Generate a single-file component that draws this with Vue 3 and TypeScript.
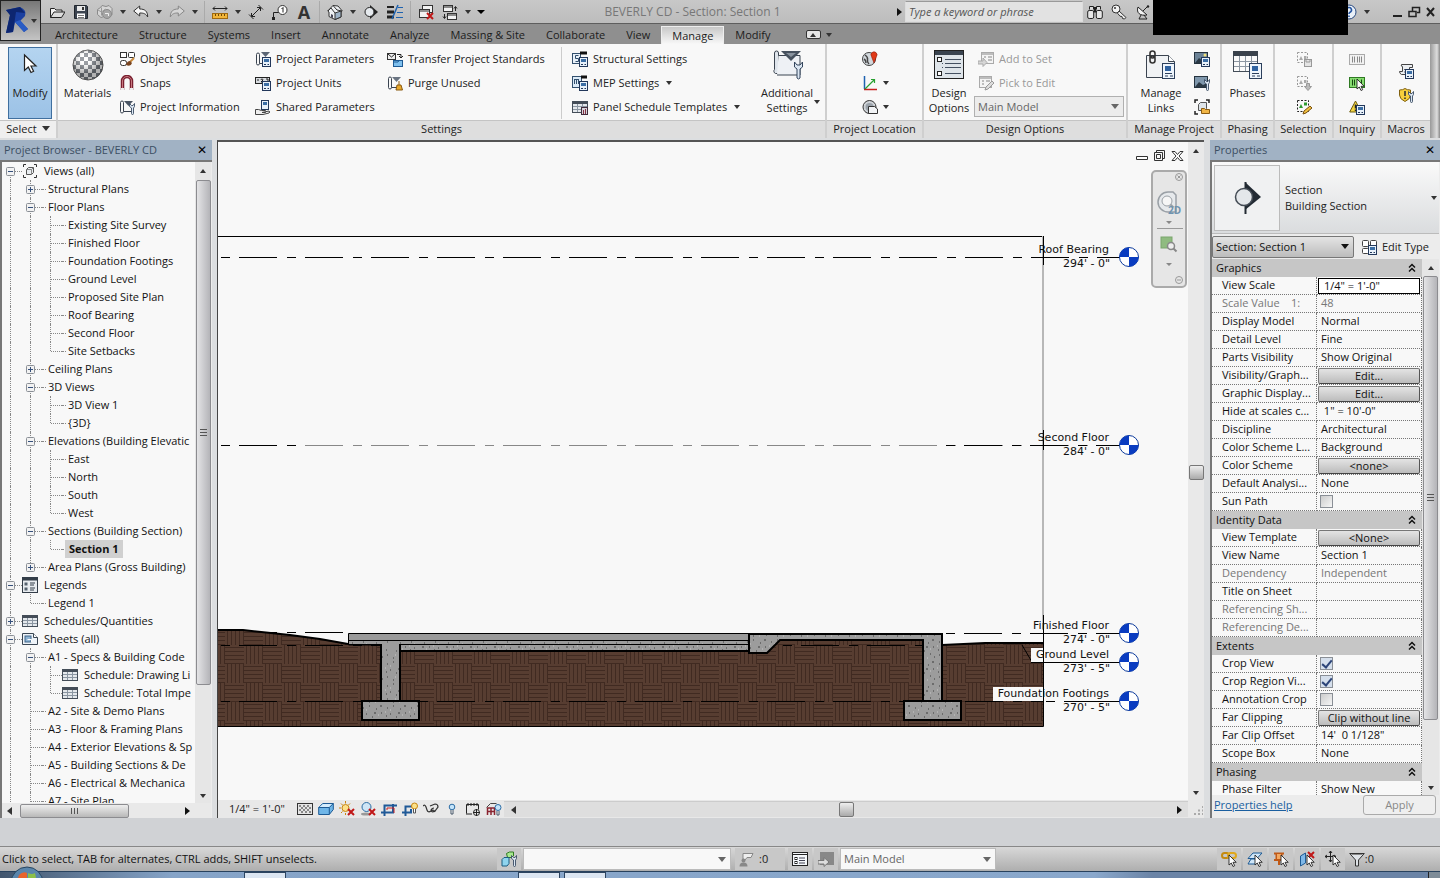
<script setup lang="ts">
import { reactive, ref } from 'vue'

/* ---------- icon artwork (inner SVG markup) ---------- */
const doc = '<rect x="7.5" y="6.5" width="8" height="9" fill="#e8f1fa" stroke="#22375a"/><rect x="9" y="8" width="5" height="3" fill="#3b6ea5"/><path d="M9 13.5h2M12.5 13.5h1.5" stroke="#22375a"/>'
const doc2 = '<rect x="17.500" y="14.500" width="12" height="15" fill="#eef5fc" stroke="#2b3f5c"/><rect x="20" y="17" width="6" height="5" fill="#2f62a0"/><path d="M20 24.500h7M20 27h3M25 27h3" stroke="#2b3f5c"/>'
const cursor = '<path d="M8 4v10l2.300-2 1.700 3.500 1.700-.8-1.700-3.400h3.200z" fill="#fff" stroke="#222" stroke-width=".9"/>'
const wrench = '<path d="M10.500 4.500v3l2 1.500v5.500a1 1 0 0 0 2 0V9l1-1.500v-3l-1.500 2h-1.500z" fill="#dbe6f2" stroke="#3a4c63" stroke-width=".9"/>'
const scroll = '<path d="M1.500 3.500a1.500 1.500 0 0 1 3 0v9H14M4.500 12.500a1.500 1.500 0 0 1-3 0v-9" fill="none" stroke="#3a4350"/>'
const redX = '<path d="M9 8l6 6M15 8l-6 6" stroke="#c01818" stroke-width="2"/>'
const sheetTable = '<rect x=".5" y="2.500" width="15" height="11" fill="#e4e8ec" stroke="#444d58"/><path d="M0 4h16" stroke="#444d58" stroke-width="2"/><path d="M5.500 5v8M1 7.500h14M1 10.500h14M10.500 5v8" stroke="#8b96a2"/>'
const grayObjs = '<path d="M1.500 1.500h10v10h-10z" fill="none" stroke="#999" stroke-dasharray="2 1.500"/><path d="M3 9l2-4 2 4zM8 5h2.500v3H8z" fill="#aaa"/>'

const icons: Record<string, string> = {
  open: '<path d="M1.500 13.500v-9h4l1.500 1.500h6v2" fill="#f2f2f2" stroke="#222"/><path d="M1.500 13.500L5 8h11l-3.500 5.500z" fill="#ddd" stroke="#222"/>',
  save: '<path d="M1.500 1.500h12l1 1v12h-13z" fill="#3c4450" stroke="#20252c"/><rect x="4" y="2" width="8" height="5" fill="#e8e8e8"/><rect x="4" y="9.500" width="8" height="5" fill="#fff"/><path d="M5 11.500h6M5 13.500h6" stroke="#777"/><rect x="9" y="3" width="2" height="3" fill="#333"/>',
  sync: '<path d="M.5 5.500l3-2 1.500-2 4 1 3-1 3 3v6l-4 4-4-2-3 1-3.500-3z" fill="#d6d6d6" stroke="#8a8a8a"/><circle cx="10" cy="10" r="4.500" fill="#a6a6a6" stroke="#8a8a8a"/><path d="M4.500 3.500v8M1 6l3.500 2 4-3" stroke="#999" fill="none"/><path d="M8 9.500h3.500V12" stroke="#eee" fill="none"/>',
  undo: '<path d="M.7 7l6-5v3c5 0 8 2 8 8-2-3.500-4-4-8-4v3z" fill="#f6f6f6" stroke="#333"/>',
  redo: '<path d="M15.300 7l-6-5v3c-5 0-8 2-8 8 2-3.500 4-4 8-4v3z" fill="#d6d6d6" stroke="#888"/>',
  measure: '<path d="M1 4.500h14M3 2.500l-2 2 2 2M13 2.500l2 2-2 2" stroke="#222" fill="none"/><rect x=".5" y="9.500" width="15" height="5" fill="#f2b63a" stroke="#a06a10"/><path d="M3.500 10v2M6.500 10v2M9.500 10v2M12.500 10v2" stroke="#704a08"/>',
  dim: '<path d="M3.500 12.500L12.500 3.500M3.500 9v3.500H7M9 3.500h3.500V7M1 10.500l4.500 4.500M10.500 1l4.500 4.500" stroke="#222" fill="none"/>',
  tag: '<path d="M1.500 15.500v-7h6" stroke="#222" fill="none"/><circle cx="10.500" cy="6" r="4.500" fill="#fff" stroke="#333"/><path d="M9.500 5l1.500-1.500v5" stroke="#222" fill="none"/><rect y="13" width="3" height="3" fill="#222"/>',
  house: '<path d="M.7 7L6 1.500l5 .5 4.300 5-1.300 1v5l-6 2.500-6-3V8z" fill="#eef1f4" stroke="#333"/><path d="M8 9l6-2v6L8 15.500z" fill="#9fb4c8" stroke="#333"/><path d="M1 7l3-3 4 5M6 1.500L10 6l5 1" stroke="#333" fill="none"/><path d="M4 10v3l2 1v-3z" fill="#445"/>',
  section: '<path d="M7 1l8 7-8 7z" fill="#222"/><circle cx="6.500" cy="8" r="4.500" fill="#e6eaee" stroke="#222"/>',
  thin: '<path d="M0 3h7" stroke="#222" stroke-width="2"/><path d="M0 8h7" stroke="#222" stroke-width="3"/><path d="M0 13h7" stroke="#222" stroke-width="3"/><path d="M5 15L11 1" stroke="#1d62b0" stroke-width="1.500"/><path d="M11 3.500h5M10 8.500h6M9 13.500h7" stroke="#1d62b0"/>',
  closeHidden: '<rect x="4.500" y="1.500" width="10" height="7" fill="#f2f2f2" stroke="#333"/><rect x="1.500" y="5.500" width="10" height="8" fill="#f2f2f2" stroke="#333"/><path d="M2 7h9" stroke="#333"/><path d="M9 9l6 6M15 9l-6 6" stroke="#c01818" stroke-width="2"/>',
  switchWin: '<rect x="1.500" y="1.500" width="9" height="6" fill="#f2f2f2" stroke="#333"/><rect x="5.500" y="9.500" width="9" height="6" fill="#f2f2f2" stroke="#333"/><path d="M5 11h10M1 3h9M13.500 7V3M12 4.500l1.500-2 1.500 2M2.500 10v4M1 12.500l1.500 2 1.500-2" stroke="#222" fill="none"/>',
  binoc: '<path d="M2.500 5.500v-3h4v3M9.500 5.500v-3h4v3" fill="#ddd" stroke="#222"/><rect x=".7" y="6.500" width="6" height="8" rx="1.500" fill="#e6e6e6" stroke="#222"/><rect x="9.300" y="6.500" width="6" height="8" rx="1.500" fill="#e6e6e6" stroke="#222"/><path d="M6.500 7.500h3M8 3v5" stroke="#222" stroke-width="2"/>',
  key: '<circle cx="5" cy="5" r="4" fill="#f2f2f2" stroke="#333"/><circle cx="4" cy="4" r="1" fill="#333"/><path d="M8 7l7 6.500-1.500 1.500-2-.5-.5-2-2-.3-2.500-3z" fill="#eee" stroke="#333"/>',
  dish: '<path d="M3 3c-2 6 2 9 9 8z" fill="#f2f2f2" stroke="#222"/><path d="M8 7l5-5M6 11l-2 4h8l-3-4" stroke="#222" fill="none"/><circle cx="13" cy="2.500" r="1.200" fill="#222"/>',
  help: '<circle cx="8" cy="8" r="7" fill="#e9f0f8" stroke="#2a4a80"/><path d="M5.500 6a2.500 2.500 0 1 1 3.500 2.300q-1 .4-1 1.700M8 11.500v1.500" fill="none" stroke="#2454a0" stroke-width="1.600"/>',
  pointer: '<path d="M10.500 6v15.500l3.800-3.500 2.700 5.500 2.600-1.200-2.600-5.300h5z" fill="#fff" stroke="#222" stroke-width="1.200"/>',
  objStyles: '<rect x="1.500" y="1.500" width="6" height="5" fill="#fff" stroke="#333"/><rect x="9.500" y="1.500" width="6" height="5" rx="1" fill="#fff" stroke="#333"/><rect x="1.500" y="9.500" width="6" height="5" rx="2" fill="#fff" stroke="#333"/><path d="M15 7l-4 4" stroke="#c98a3c" stroke-width="2"/><path d="M7 14q1-4 4-4l2 2q-1 4-6 2z" fill="#7a4520"/>',
  snaps: '<path d="M3.500 15V6a4.500 4.500 0 0 1 9 0v9" fill="none" stroke="#7a2030" stroke-width="3.500"/><path d="M3.500 13V6a4.500 4.500 0 0 1 9 0v7" fill="none" stroke="#c87880" stroke-width="1"/><path d="M2 14h3M11 14h3" stroke="#eee" stroke-width="2"/>',
  projInfo: scroll + '<path d="M5 2h9l-4.500 5z" fill="#4a5564"/>' + wrench,
  projParam: scroll + '<path d="M6 1h9l-4.500 5z" fill="#5b6675"/>' + doc,
  units: '<rect x=".5" y="2.500" width="14" height="6" fill="#d8dce0" stroke="#222"/><path d="M3 4v2M6 5a1 1 0 1 1 2 0l-2 2h2M11 4h2v3h-2" stroke="#222" fill="none"/>' + doc,
  shared: '<rect x="6.500" y="1.500" width="7" height="9" fill="#e8f1fa" stroke="#22375a"/><rect x="8" y="3" width="4" height="3" fill="#3b6ea5"/><path d="M.5 10.500h3l3 1h4q1.500 1 0 2H7l7-1.500q1.500 1 0 2l-6 1.500H.5z" fill="#eee" stroke="#444"/>',
  transfer: '<rect x=".5" y="2.500" width="8" height="6" fill="#eee" stroke="#333"/><path d="M1 3l3.500 3L8 3M10 3.500h4v3M12 5l2 2 2-2" stroke="#222" fill="none"/><rect x="6.500" y="9.500" width="9" height="6" fill="#7fc0ee" stroke="#1d5a94"/><path d="M7 11h4l1-1.500" stroke="#1d5a94" fill="none"/>',
  purge: scroll + '<path d="M5 2h9l-4.500 5z" fill="#6a7482"/><path d="M12 6v4M9 15l1-5h4l1.500 5z" fill="#e9a92c" stroke="#8a5a10"/>',
  structSet: '<rect x=".5" y="2.500" width="8" height="10" fill="#eaf2fa" stroke="#33506e"/><path d="M6.500 4.500h-3v3h3v3h-3" stroke="#33506e" fill="none"/><path d="M8 2h7" stroke="#111" stroke-width="3"/>' + doc,
  mepSet: '<rect x=".5" y="1.500" width="9" height="11" fill="#dcebf8" stroke="#33506e"/><path d="M2 4.500h5M2.500 4v5M4.500 4v5M6.500 4v5" stroke="#33506e"/><path d="M9 2h6" stroke="#111" stroke-width="3"/>' + doc,
  panelSched: sheetTable + '<rect x="9.500" y="8.500" width="6" height="7" fill="#d8d4dc" stroke="#402c3c"/><path d="M11.500 15v-4M13.500 15v-5" stroke="#803040"/>',
  additional: '<path d="M3.500 4a2 2 0 0 1 4 0v20.500H4.500a2.500 2.500 0 0 1-1-4z" fill="#dfe5ec" stroke="#3b4450"/><path d="M7.500 6.500H29V26H6" fill="#eef1f5" stroke="#3b4450"/><path d="M10 2h20l-10 10z" fill="#47525f"/><path d="M15 4h10l-5 4z" fill="#8a949f"/><path d="M23.500 13v5l2.500 2v9q1.500 2 3 0v-9l2.500-2v-5l-2.500 3h-3z" fill="#dbe6f2" stroke="#33455c"/>',
  location: '<circle cx="7" cy="8" r="6.500" fill="#d2d8dd" stroke="#444"/><path d="M3 4q3 2 2.500 4.500T7 13M2 8q2 1 2 4" stroke="#444" fill="none" stroke-width="1.500"/><path d="M12 12L9.500 5.500a3 3 0 1 1 5 0z" fill="#e03a18" stroke="#901a08" stroke-width=".6"/>',
  axes: '<path d="M2.500 1v13" stroke="#1d62b0" stroke-width="1.500"/><path d="M2 14.500h13" stroke="#c82020" stroke-width="1.500"/><path d="M3 14l9-9M9 4.500h3.500V8" stroke="#28a030" fill="none" stroke-width="1.200"/>',
  position: '<circle cx="7.500" cy="8" r="6.500" fill="#d0d4d8" stroke="#333"/><circle cx="7.500" cy="8" r="4" fill="#9aa2aa"/><path d="M6.500 14.500v-7h6l3 2.500v4.500z" fill="#f2f4f6" stroke="#333"/>',
  designOpt: '<rect x="1.500" y="1.500" width="29" height="28" fill="#dfe5ea" stroke="#222"/><path d="M2 4h28" stroke="#3a4450" stroke-width="4"/><rect x="4.500" y="8.500" width="4" height="4" fill="#fff" stroke="#222"/><rect x="4.500" y="22.500" width="4" height="4" fill="#fff" stroke="#222"/><path d="M12 10.500h16M12 14.500h16M12 18.500h16M12 24.500h16M9 14.500h1M9 18.500h1" stroke="#445060"/>',
  addSet: '<rect x="3.500" y="1.500" width="12" height="11" fill="#f4f4f4" stroke="#aaa"/><path d="M4 3h11M6 6h2M10 6h4M10 9h4" stroke="#aaa" stroke-width="1.500"/><path d="M0 10h5V7l4 4.500-4 4V13H0z" fill="#d6d6d6" stroke="#aaa"/>',
  pickEdit: '<rect x="1.500" y="1.500" width="12" height="11" fill="#f4f4f4" stroke="#aaa"/><path d="M2 3h11M4 6h2M8 6h4M4 9h2" stroke="#aaa" stroke-width="1.500"/><path d="M7 15l1-3 6-6 2 2-6 6z" fill="#ddd" stroke="#999"/>',
  manageLinks: '<path d="M1.500 6.500h22l6 6v16h-28z" fill="#f0f2f4" stroke="#3b4450"/><path d="M23.500 6.500v6h6" fill="#fff" stroke="#3b4450"/><rect x="5" y="2" width="5" height="7" rx="2.500" fill="none" stroke="#333" stroke-width="1.600"/><rect x="5" y="7" width="5" height="7" rx="2.500" fill="none" stroke="#333" stroke-width="1.600"/>' + doc2,
  decal: '<rect x=".5" y="1.500" width="13" height="11" fill="#6b8296" stroke="#26333f"/><path d="M1 12l4-5 4 3 4-2v4z" fill="#2a3844"/><circle cx="11" cy="4" r="1.500" fill="#f2e27a"/>' + doc,
  images: '<rect x=".5" y="1.500" width="13" height="11" fill="#7f97ac" stroke="#26333f"/><path d="M1 12l4-5 4 3 4-2v4z" fill="#2a3844"/>' + wrench,
  startView: '<path d="M1 4V1h3M12 1h3v3M1 12v3h3" stroke="#222" fill="none" stroke-width="1.500"/><path d="M4.500 5.500l2-2h6v6l-2 2h-6z" fill="#dfe5ea" stroke="#555"/><path d="M7.500 14.500v-5h3l1 1h4v4z" fill="#f0b545" stroke="#8a5a10"/>',
  phases: '<rect x="1.500" y="2.500" width="24" height="20" fill="#fafafa" stroke="#444d58"/><path d="M1 4.500h25" stroke="#3a424c" stroke-width="5"/><path d="M2 12.500h23M2 17.500h23M7.500 7v15M13.500 7v15M19.500 7v15" stroke="#8d97a2"/>' + doc2,
  selSave: grayObjs + '<rect x="8.500" y="8.500" width="7" height="7" fill="#e4e4e4" stroke="#999"/><path d="M10 9v2h4V9" stroke="#999" fill="none"/>',
  selLoad: grayObjs + '<path d="M10.500 8.500h3v3h2L12 15.500l-3.500-4h2z" fill="#bbb" stroke="#999"/>',
  selEdit: '<path d="M1.500 1.500h11v11h-11z" fill="none" stroke="#222" stroke-dasharray="2 1.500"/><path d="M3 9l2-4 2 4zM8 3.500h3v3H8z" fill="#2f9a2f"/><path d="M7 15l1-3 6-5 2 2-6 5z" fill="#f0c040" stroke="#7a5010"/>',
  ids: '<rect x=".5" y="3.500" width="15" height="10" fill="#f2f2f2" stroke="#aaa"/><path d="M3.500 5.500v6M5.500 5.500v6M8.500 5.500v6M10.500 5.500v6M12.500 5.500v6" stroke="#888"/>',
  idSel: '<rect x=".5" y="2.500" width="15" height="10" fill="#86dc70" stroke="#2f7a22"/><path d="M3.500 4.500v6M5.500 4.500v6M8.500 4.500v6M12.500 4.500v6" stroke="#164a10"/>' + cursor,
  warn: '<path d="M6.500 2L.7 13h11.600z" fill="#f4d640" stroke="#6a5a10"/><path d="M6.500 5.500v4M6.500 10.500v1.500" stroke="#222" stroke-width="1.500"/>' + doc,
  macroMgr: '<path d="M3.500 1.500h11v3h-3v7h-8q-2-1-2-3h3v-5q-2 0-1-2z" fill="#eceff2" stroke="#444"/><path d="M6 6.500h4M6 9h2" stroke="#666"/>' + doc,
  macroSec: '<path d="M1.500 3Q5 3 7 1.500 9 3 12.500 3v5q0 4-5.500 6.500Q1.500 12 1.500 8z" fill="#f6cf3c" stroke="#806010"/><path d="M7 4v5M7 10.500v1.500" stroke="#333" stroke-width="1.600"/>' + wrench,
  views: '<path d="M1.500 4V1.500H4M12 1.500h2.500V4M1.500 12v2.500H4M12 14.500h2.500V12" stroke="#333" fill="none"/><path d="M4.500 6.500l2-2h5v5l-2 2h-5z" fill="#e9edf0" stroke="#555"/><path d="M4.500 6.500h5v5M9.500 6.500l2-2" stroke="#888" fill="none"/>',
  legends: '<rect x=".5" y=".5" width="15" height="15" fill="#e8ecf0" stroke="#333d48"/><path d="M0 2h16" stroke="#333d48" stroke-width="3"/><path d="M8 6h5M8 8h4M8 11h5M8 13h4" stroke="#333d48"/><rect x="2.500" y="5.500" width="3" height="3" fill="#56626e"/><rect x="2.500" y="10.500" width="3" height="3" fill="#56626e"/>',
  schedule: sheetTable,
  sheets: '<path d="M.5 2.500h11l4 4v7H.5z" fill="#eef3f8" stroke="#3a4653"/><path d="M11.500 2.500v4h4" fill="#fff" stroke="#3a4653"/><rect x="3" y="5" width="6" height="6" fill="#8fb4d4" stroke="#3f6488"/><path d="M5.500 8.500h4v3" fill="none" stroke="#fff"/>',
  editType: '<rect x="1.500" y="1.500" width="6" height="6" rx="1" fill="#fff" stroke="#444"/><rect x="9.500" y="1.500" width="6" height="6" rx="1" fill="#fff" stroke="#444"/><rect x="1.500" y="9.500" width="6" height="5" rx="1" fill="#fff" stroke="#444"/>' + doc,
  detail: '<rect x="0" y="2" width="16" height="12" fill="#e4e4e4"/><path d="M2 5h12M2 9h12" stroke="#888" stroke-width="2" stroke-dasharray="2 2"/><path d="M4 7h10M4 11h10" stroke="#888" stroke-width="2" stroke-dasharray="2 2"/><rect x=".5" y="2.500" width="15" height="11" fill="none" stroke="#333"/>',
  style: '<path d="M.7 6.500l4-4h10.600v6l-4 5H.7z" fill="#6fb6e8" stroke="#1d5a94"/><path d="M.7 6.500h10.600v7M11.300 6.500l4-4" stroke="#1d5a94" fill="none"/><path d="M1.500 6l3.500-3h9l-3 3z" fill="#d4ecfc"/>',
  sun: '<circle cx="6.500" cy="7" r="3.500" fill="#fce08a" stroke="#c88510"/><path d="M6.500 0v2.500M6.500 12v2M0 7h2M2 2.500l1.500 1.500M11 2.500L9.500 4M2 12l1.500-1.500" stroke="#c88510"/>' + redX,
  shadow: '<circle cx="6.500" cy="6" r="4.500" fill="#cfe6f6" stroke="#2c6ca4"/><ellipse cx="6" cy="13" rx="5" ry="1.500" fill="#999"/>' + redX,
  crop: '<path d="M3.500 15V4.500H16M0 11.500h12V3" fill="none" stroke="#205a98" stroke-width="2"/><path d="M6 9V7h7v5" stroke="#c82020" fill="none"/>',
  cropShow: '<path d="M3.500 15V5.500H10M0 11.500h9V8" fill="none" stroke="#205a98" stroke-width="2"/><circle cx="12.500" cy="5" r="3" fill="#fbe18a" stroke="#c88510"/><path d="M11.500 8v4h2V8" fill="#fff" stroke="#555"/>',
  hide: '<path d="M0 5q2-2 3 1l1 3q1 3 4 1t4 1M7 5l5-2q3 0 3 3l-3 4q-4 2-4-1 1-2 3-2" fill="none" stroke="#333" stroke-width="1.200"/>',
  bulb: '<circle cx="8" cy="6" r="2.800" fill="#c4e4fa" stroke="#2c6ca4"/><path d="M7 9v4h2V9" fill="#fff" stroke="#456"/>',
  tempProps: '<path d="M1.500 12.500v-9h12v5" fill="none" stroke="#222"/><path d="M3 2v3M6 2v3M9 2v3M12 2v3M1 13h6" stroke="#222"/><circle cx="11.500" cy="11.500" r="3" fill="#eee" stroke="#222"/><path d="M11.500 8v7M8 11.500h7" stroke="#222"/>',
  analytic: '<path d="M.5 6.500l4-4h6" fill="none" stroke="#444"/><path d="M1.500 14V7M5 14V7M8.500 14V7M1 7h9M1 10.500h8" fill="none" stroke="#8a2430" stroke-width="1.500"/><circle cx="12" cy="6.500" r="3" fill="#c4e4fa" stroke="#2c6ca4"/><path d="M11 10v4h2v-4" fill="#fff" stroke="#456"/>',
  worksets: '<path d="M5.500 2.500l3-1.500h4v4l-2 1.500h-4z" fill="#a8e890" stroke="#2f7a22"/><path d="M1 8.500l2-2h5v6l-2 2.500H1z" fill="#8fd4ee" stroke="#1c5c80"/>' + wrench,
  editable: '<path d="M4 2.500h10l-2 4H8L6 9l-2-1z" fill="#eee" stroke="#888"/><circle cx="4.500" cy="9.500" r="2" fill="#888"/><path d="M.5 15.500q0-4 4-4t4 4z" fill="#888"/>',
  optBox: '<rect x=".5" y="1.500" width="15" height="13" fill="#f4f7fa" stroke="#222"/><path d="M1 3.500h14" stroke="#222"/><path d="M7 7h6M7 9.500h6M7 12h6" stroke="#445"/><rect x="3" y="6.500" width="2" height="2" fill="none" stroke="#222"/><rect x="3" y="10.500" width="2" height="2" fill="none" stroke="#222"/>',
  optActive: '<path d="M2 1h14v13H2z" fill="#888"/><path d="M0 9.500h6V6.500l5 4.500-5 4.500V13H0z" fill="#ddd" stroke="#777"/>',
  selLinks: '<rect x="1" y="2" width="7" height="5" rx="2.500" fill="none" stroke="#c48a10" stroke-width="2"/><rect x="7" y="2" width="8" height="5" rx="2.500" fill="none" stroke="#e0a81c" stroke-width="2"/>' + cursor,
  selUnder: '<path d="M1 7.500L6 2h9l-5 5.500zM1 13l3-5h8l-3 5z" fill="#cfe6f8" stroke="#1d5a94"/>' + cursor,
  selPin: '<path d="M1 2.500h10M3.500 3v5M8.500 3v5M1 9h10M6 9v5" stroke="#c05a18" stroke-width="2"/><rect x="4" y="3" width="4" height="5" fill="#f4a860"/>' + cursor,
  selFace: '<path d="M1.500 5l5-3v10l-5 3z" fill="#7fb8e8" stroke="#1d5a94"/><path d="M9 1l6 6M15 1L9 7" stroke="#c01818" stroke-width="2"/>' + cursor,
  drag: '<path d="M5.500 0v11M0 5.500h11M4 2l1.500-2L7 2M4 9l1.500 2L7 9M2 4L0 5.500 2 7M9 4l2 1.500L9 7" stroke="#222" fill="none"/>' + cursor,
  filter: '<path d="M.7 2.500h14.600L9.500 9v6h-3V9z" fill="#dfe3e7" stroke="#333"/><path d="M2.500 3.500h11" stroke="#888"/>',
}

/* ---------- quick access toolbar ---------- */
interface Quick { kind: 'icon' | 'arrow' | 'sep' | 'letter'; name: string }
const q = (kind: Quick['kind'], name = ''): Quick => ({ kind, name })
const quick: Quick[] = [
  q('icon', 'open'), q('icon', 'save'), q('icon', 'sync'), q('arrow', 'sync menu'), q('icon', 'undo'), q('arrow', 'undo menu'),
  q('icon', 'redo'), q('arrow', 'redo menu'), q('sep'), q('icon', 'measure'), q('arrow', 'measure menu'), q('icon', 'dim'),
  q('icon', 'tag'), q('letter', 'A'), q('sep'), q('icon', 'house'), q('arrow', '3D menu'), q('icon', 'section'), q('icon', 'thin'),
  q('sep'), q('icon', 'closeHidden'), q('icon', 'switchWin'), q('arrow', 'window menu'), q('arrow', 'customize'),
]

const tabs = ['Architecture', 'Structure', 'Systems', 'Insert', 'Annotate', 'Analyze', 'Massing & Site', 'Collaborate', 'View', 'Manage', 'Modify']
const activeTab = ref('Manage')

interface Cmd { icon: string; label: string; menu?: boolean }
const settingsColumns: { cls: string; items: Cmd[] }[] = [
  { cls: 'c1', items: [{ icon: 'objStyles', label: 'Object Styles' }, { icon: 'snaps', label: 'Snaps' }, { icon: 'projInfo', label: 'Project Information' }] },
  { cls: 'c2', items: [{ icon: 'projParam', label: 'Project Parameters' }, { icon: 'units', label: 'Project Units' }, { icon: 'shared', label: 'Shared Parameters' }] },
  { cls: 'c3', items: [{ icon: 'transfer', label: 'Transfer Project Standards' }, { icon: 'purge', label: 'Purge Unused' }] },
  { cls: 'c4', items: [{ icon: 'structSet', label: 'Structural Settings' }, { icon: 'mepSet', label: 'MEP Settings', menu: true }, { icon: 'panelSched', label: 'Panel Schedule Templates', menu: true }] },
]

/* ---------- project browser ---------- */
interface Node { d: number; label: string; exp?: '+' | '-'; icon?: string; bold?: boolean }
const nodes: Node[] = [
  { d: 0, label: 'Views (all)', exp: '-', icon: 'views' },
  { d: 1, label: 'Structural Plans', exp: '+' },
  { d: 1, label: 'Floor Plans', exp: '-' },
  { d: 2, label: 'Existing Site Survey' }, { d: 2, label: 'Finished Floor' }, { d: 2, label: 'Foundation Footings' },
  { d: 2, label: 'Ground Level' }, { d: 2, label: 'Proposed Site Plan' }, { d: 2, label: 'Roof Bearing' },
  { d: 2, label: 'Second Floor' }, { d: 2, label: 'Site Setbacks' },
  { d: 1, label: 'Ceiling Plans', exp: '+' },
  { d: 1, label: '3D Views', exp: '-' },
  { d: 2, label: '3D View 1' }, { d: 2, label: '{3D}' },
  { d: 1, label: 'Elevations (Building Elevatic', exp: '-' },
  { d: 2, label: 'East' }, { d: 2, label: 'North' }, { d: 2, label: 'South' }, { d: 2, label: 'West' },
  { d: 1, label: 'Sections (Building Section)', exp: '-' },
  { d: 2, label: 'Section 1', bold: true },
  { d: 1, label: 'Area Plans (Gross Building)', exp: '+' },
  { d: 0, label: 'Legends', exp: '-', icon: 'legends' },
  { d: 1, label: 'Legend 1' },
  { d: 0, label: 'Schedules/Quantities', exp: '+', icon: 'schedule' },
  { d: 0, label: 'Sheets (all)', exp: '-', icon: 'sheets' },
  { d: 1, label: 'A1 - Specs & Building Code', exp: '-' },
  { d: 2, label: 'Schedule: Drawing Li', icon: 'schedule' },
  { d: 2, label: 'Schedule: Total Impe', icon: 'schedule' },
  { d: 1, label: 'A2 - Site & Demo Plans' }, { d: 1, label: 'A3 - Floor & Framing Plans' },
  { d: 1, label: 'A4 - Exterior Elevations & Sp' }, { d: 1, label: 'A5 - Building Sections & De' },
  { d: 1, label: 'A6 - Electrical & Mechanica' }, { d: 1, label: 'A7 - Site Plan' },
]
function hasNext(i: number, level: number): boolean {
  for (let j = i + 1; j < nodes.length; j++) {
    if (nodes[j].d < level) return false
    if (nodes[j].d === level) return true
  }
  return level < 2
}
function guides(i: number): string[] {
  const out: string[] = []
  for (let l = 0; l <= nodes[i].d; l++) {
    const next = hasNext(i, l)
    if (l === nodes[i].d) out.push((i === 0 ? 'below ' : next ? 'full ' : 'half ') + 'stub')
    else out.push(next ? 'full' : '')
  }
  return out
}

/* ---------- properties ---------- */
interface Prop { name: string; value?: string; kind?: 'button' | 'check' | 'field'; dim?: boolean; on?: boolean }
const groups = reactive<{ title: string; rows: Prop[] }[]>([
  { title: 'Graphics', rows: [
    { name: 'View Scale', value: '1/4" = 1\'-0"', kind: 'field' },
    { name: 'Scale Value    1:', value: '48', dim: true },
    { name: 'Display Model', value: 'Normal' }, { name: 'Detail Level', value: 'Fine' },
    { name: 'Parts Visibility', value: 'Show Original' },
    { name: 'Visibility/Graph...', value: 'Edit...', kind: 'button' },
    { name: 'Graphic Display...', value: 'Edit...', kind: 'button' },
    { name: 'Hide at scales c...', value: ' 1" = 10\'-0"' }, { name: 'Discipline', value: 'Architectural' },
    { name: 'Color Scheme L...', value: 'Background' }, { name: 'Color Scheme', value: '<none>', kind: 'button' },
    { name: 'Default Analysi...', value: 'None' }, { name: 'Sun Path', kind: 'check', on: false },
  ] },
  { title: 'Identity Data', rows: [
    { name: 'View Template', value: '<None>', kind: 'button' }, { name: 'View Name', value: 'Section 1' },
    { name: 'Dependency', value: 'Independent', dim: true }, { name: 'Title on Sheet', value: '' },
    { name: 'Referencing Sh...', value: '', dim: true }, { name: 'Referencing De...', value: '', dim: true },
  ] },
  { title: 'Extents', rows: [
    { name: 'Crop View', kind: 'check', on: true }, { name: 'Crop Region Vi...', kind: 'check', on: true },
    { name: 'Annotation Crop', kind: 'check', on: false },
    { name: 'Far Clipping', value: 'Clip without line', kind: 'button' },
    { name: 'Far Clip Offset', value: '14\'  0 1/128"' }, { name: 'Scope Box', value: 'None' },
  ] },
  { title: 'Phasing', rows: [{ name: 'Phase Filter', value: 'Show New' }] },
])

/* ---------- section drawing ---------- */
const levels = [
  { name: 'Roof Bearing', elev: '294\' - 0"', y: 257 },
  { name: 'Second Floor', elev: '284\' - 0"', y: 445 },
  { name: 'Finished Floor', elev: '274\' - 0"', y: 633 },
  { name: 'Ground Level', elev: '273\' - 5"', y: 662 },
  { name: 'Foundation Footings', elev: '270\' - 5"', y: 701 },
]
const viewTools = ['detail', 'style', 'sun', 'shadow', 'crop', 'cropShow', 'hide', 'bulb', 'tempProps', 'analytic']
const selectTools = ['selLinks', 'selUnder', 'selPin', 'selFace', 'drag']
const search = ref('')
const filterText = ref('')
</script>

<template>
  <div class="app">
    <header class="top">
      <button class="logo" aria-label="Application menu">
        <svg width="26" height="28" viewBox="0 0 26 28">
          <path d="M2 3L16 0q7 3 5 9l-5 5 8 8-4 3-9-10-2 10-7 1L6 8z" fill="#1a3fa0" />
          <path d="M2 3L16 0l5 6-9-1-3 20-7 1L6 8z" fill="#0d2670" />
          <path d="M11 15l5-2 8 9-4 3z" fill="#2a5cc4" />
        </svg>
        <i class="tri"></i>
      </button>
      <div class="bars">
        <div class="titlebar">
          <div class="quick">
            <template v-for="(b, i) in quick" :key="i">
              <i v-if="b.kind === 'sep'" class="qsep"></i>
              <button v-else-if="b.kind === 'arrow'" class="qarrow" :class="{ custom: b.name === 'customize' }" :aria-label="b.name"><i class="tri"></i></button>
              <button v-else-if="b.kind === 'letter'" class="qbtn letter">{{ b.name }}</button>
              <button v-else class="qbtn" :aria-label="b.name"><svg class="ic" viewBox="0 0 16 16" v-html="icons[b.name]"></svg></button>
            </template>
          </div>
          <h1>BEVERLY CD - Section: Section 1</h1>
          <div class="search">
            <i class="tri right"></i>
            <input v-model="search" aria-label="Search" placeholder="Type a keyword or phrase" />
            <button class="qbtn" aria-label="Find"><svg class="ic" viewBox="0 0 16 16" v-html="icons.binoc"></svg></button>
            <button class="qbtn" aria-label="Subscription"><svg class="ic" viewBox="0 0 16 16" v-html="icons.key"></svg></button>
            <button class="qbtn" aria-label="Communication"><svg class="ic" viewBox="0 0 16 16" v-html="icons.dish"></svg></button>
          </div>
          <div class="wincontrols">
            <button class="qbtn" aria-label="Help"><svg class="ic" viewBox="0 0 16 16" v-html="icons.help"></svg></button>
            <button class="qarrow" aria-label="Help menu"><i class="tri"></i></button>
            <svg class="win" width="48" height="16" viewBox="0 0 48 16">
              <path d="M1 12h9" stroke="#222" stroke-width="2" />
              <path d="M17 7.500h7v5h-7zM20.500 7V3.500h7v5H25" fill="none" stroke="#222" stroke-width="1.500" />
              <path d="M35 4l7 8M42 4l-7 8" stroke="#222" stroke-width="2" />
            </svg>
          </div>
        </div>
        <nav class="tabs">
          <button v-for="t in tabs" :key="t" :class="{ on: t === activeTab }" @click="activeTab = t">{{ t }}</button>
          <span class="pill"><i class="tri up"></i></span><i class="tri"></i>
        </nav>
      </div>
      <div class="redacted"></div>
    </header>

    <section class="ribbon">
      <div class="panel p-select">
        <div class="body">
          <button class="big modify"><svg class="ic32" viewBox="0 0 32 32" v-html="icons.pointer"></svg><span>Modify</span></button>
        </div>
        <footer>Select <i class="tri"></i></footer>
      </div>
      <div class="panel p-settings">
        <div class="body">
          <button class="big materials">
            <svg class="ic32" viewBox="0 0 32 32">
              <defs>
                <pattern id="chk" width="8" height="8" patternUnits="userSpaceOnUse"><rect width="8" height="8" fill="#fff" /><path d="M0 0h4v4H0zM4 4h4v4H4z" fill="#70767e" /></pattern>
                <radialGradient id="shade" cx=".4" cy=".3"><stop offset=".3" stop-color="#fff" stop-opacity=".3" /><stop offset="1" stop-color="#222" stop-opacity=".35" /></radialGradient>
              </defs>
              <circle cx="16" cy="16" r="15" fill="url(#chk)" stroke="#555" /><circle cx="16" cy="16" r="15" fill="url(#shade)" />
            </svg>
            <span>Materials</span>
          </button>
          <div v-for="c in settingsColumns" :key="c.cls" class="col" :class="c.cls">
            <button v-for="it in c.items" :key="it.label" class="cmd">
              <svg class="ic" viewBox="0 0 16 16" v-html="icons[it.icon]"></svg><span>{{ it.label }}</span><i v-if="it.menu" class="tri"></i>
            </button>
          </div>
          <button class="big additional"><svg class="ic32" viewBox="0 0 32 32" v-html="icons.additional"></svg><span>Additional<br />Settings</span><i class="tri"></i></button>
        </div>
        <footer>Settings</footer>
      </div>
      <div class="panel p-location">
        <div class="body center">
          <div class="col">
            <button class="cmd" aria-label="Location"><svg class="ic" viewBox="0 0 16 16" v-html="icons.location"></svg></button>
            <button class="cmd" aria-label="Coordinates"><svg class="ic" viewBox="0 0 16 16" v-html="icons.axes"></svg><i class="tri"></i></button>
            <button class="cmd" aria-label="Position"><svg class="ic" viewBox="0 0 16 16" v-html="icons.position"></svg><i class="tri"></i></button>
          </div>
        </div>
        <footer>Project Location</footer>
      </div>
      <div class="panel p-design">
        <div class="body">
          <button class="big"><svg class="ic32" viewBox="0 0 32 32" v-html="icons.designOpt"></svg><span>Design<br />Options</span></button>
          <div class="col grow">
            <button class="cmd off" disabled><svg class="ic" viewBox="0 0 16 16" v-html="icons.addSet"></svg><span>Add to Set</span></button>
            <button class="cmd off" disabled><svg class="ic" viewBox="0 0 16 16" v-html="icons.pickEdit"></svg><span>Pick to Edit</span></button>
            <label class="combo gray"><select aria-label="Design option"><option>Main Model</option></select><i class="tri"></i></label>
          </div>
        </div>
        <footer>Design Options</footer>
      </div>
      <div class="panel p-manage">
        <div class="body">
          <button class="big"><svg class="ic32" viewBox="0 0 32 32" v-html="icons.manageLinks"></svg><span>Manage<br />Links</span></button>
          <div class="col">
            <button class="cmd" aria-label="Decal Types"><svg class="ic" viewBox="0 0 16 16" v-html="icons.decal"></svg></button>
            <button class="cmd" aria-label="Manage Images"><svg class="ic" viewBox="0 0 16 16" v-html="icons.images"></svg></button>
            <button class="cmd" aria-label="Starting View"><svg class="ic" viewBox="0 0 16 16" v-html="icons.startView"></svg></button>
          </div>
        </div>
        <footer>Manage Project</footer>
      </div>
      <div class="panel p-phasing">
        <div class="body center"><button class="big"><svg class="ic32" viewBox="0 0 32 32" v-html="icons.phases"></svg><span>Phases</span></button></div>
        <footer>Phasing</footer>
      </div>
      <div class="panel p-selection">
        <div class="body center"><div class="col">
          <button v-for="n in ['selSave', 'selLoad', 'selEdit']" :key="n" class="cmd" :aria-label="n"><svg class="ic" viewBox="0 0 16 16" v-html="icons[n]"></svg></button>
        </div></div>
        <footer>Selection</footer>
      </div>
      <div class="panel p-inquiry">
        <div class="body center"><div class="col">
          <button v-for="n in ['ids', 'idSel', 'warn']" :key="n" class="cmd" :aria-label="n"><svg class="ic" viewBox="0 0 16 16" v-html="icons[n]"></svg></button>
        </div></div>
        <footer>Inquiry</footer>
      </div>
      <div class="panel p-macros">
        <div class="body center"><div class="col mid">
          <button v-for="n in ['macroMgr', 'macroSec']" :key="n" class="cmd" :aria-label="n"><svg class="ic" viewBox="0 0 16 16" v-html="icons[n]"></svg></button>
        </div></div>
        <footer>Macros</footer>
      </div>
      <div class="ribbon-end"></div>
    </section>

    <main>
      <aside class="browser">
        <div class="phead"><span>Project Browser - BEVERLY CD</span><button aria-label="Close">✕</button></div>
        <div class="pbody">
          <div class="treewrap">
            <ul class="tree">
              <li v-for="(n, i) in nodes" :key="i">
                <span v-for="(g, k) in guides(i)" :key="k" class="guide" :class="g">
                  <button v-if="n.exp && k === n.d" class="exp" :aria-label="n.exp === '+' ? 'Expand' : 'Collapse'"><svg width="9" height="9" viewBox="0 0 9 9"><rect x=".5" y=".5" width="8" height="8" rx="1" fill="#f2f2f2" stroke="#8a8f96" /><path :d="n.exp === '+' ? 'M2 4.500h5M4.500 2v5' : 'M2 4.500h5'" stroke="#35507c" /></svg></button>
                </span>
                <svg v-if="n.icon" class="ic" viewBox="0 0 16 16" v-html="icons[n.icon]"></svg>
                <i v-else class="tail"></i>
                <span class="lbl" :class="{ iconed: n.icon, cur: n.bold }">{{ n.label }}</span>
              </li>
            </ul>
            <div class="vbar"><i class="tri up"></i><div class="thumb tree-thumb"><i class="grip"></i></div><i class="tri"></i></div>
          </div>
          <div class="hbar"><i class="tri left"></i><div class="thumb h"><i class="grip v"></i></div><i class="tri right"></i></div>
        </div>
      </aside>

      <section class="view">
        <div class="canvasrow">
          <div class="canvas">
            <svg class="drawing" viewBox="218 142 970 658" preserveAspectRatio="xMinYMin meet">
              <defs>
                <pattern id="earth" x="225" y="645" width="38" height="38" patternUnits="userSpaceOnUse">
                  <rect width="38" height="38" fill="#573d31" />
                  <path d="M0 2.500h19M0 6.500h19M0 10.500h19M0 14.500h19M0 18.500h19M21.500 0v19M25.500 0v19M29.500 0v19M33.500 0v19M37.500 0v19M2.500 19v19M6.500 19v19M10.500 19v19M14.500 19v19M18.500 19v19M19 21.500h19M19 25.500h19M19 29.500h19M19 33.500h19M19 37.500h19" stroke="#402a21" />
                </pattern>
                <pattern id="conc" width="24" height="22" patternUnits="userSpaceOnUse">
                  <rect width="24" height="22" fill="#9c9c9c" />
                  <path d="M3 4h1M9 2h1M16 5h1M21 9h1M6 10h1M12 13h1M18 16h1M3 17h1M9 20h1M14 9h2M20 2h2M2 12h1M22 19h1" stroke="#3c3c3c" />
                  <path d="M6 6h1M18 11h1M11 17h1M15 20h1M1 8h1" stroke="#c8c8c8" />
                </pattern>
              </defs>
              <path d="M218 236.500H1043" stroke="#000" />
              <path d="M1043 236V630" stroke="#b8b8b8" stroke-width="2" />
              <path d="M1043.500 236V265M1043.500 430V450M1043.500 615V645" stroke="#000" />
              <path d="M218 257.500H1118" class="lv" /><path d="M218 445.500H1118" class="lv soft" /><path d="M943 445.500H1118M218 445.500H300" class="lv" /><path d="M943 633.500H1118" class="lv" /><path d="M218 632.500H348" class="lv" />
              <path d="M218 630H243L290 635 320 639 348 644H400V651H765L780 640H924V646L985 643H1043V726H218Z" fill="url(#earth)" />
              <path d="M218 630H243L290 635 320 639 348 644M942 645L985 643H1043" fill="none" stroke="#000" stroke-width="2" />
              <path d="M218 726.500H1043.500V643" fill="none" stroke="#000" />
              <path d="M218 645.500H380M780 645.500H922M218 701.500H1043" class="lv" />
              <path d="M348.500 633.500H749V651H400V645H348.500Z" fill="url(#conc)" stroke="#000" />
              <rect x="349" y="634" width="400" height="6" fill="#9a9a9a" />
              <path d="M349 640.500H749M349 644.500H749" stroke="#000" />
              <path d="M400 651H750" stroke="#000" stroke-width="2" />
              <rect x="381" y="645" width="19" height="57" fill="url(#conc)" stroke="#000" stroke-width="2" />
              <rect x="382" y="643" width="17" height="6" fill="#9c9c9c" />
              <rect x="362" y="701" width="57" height="19" fill="url(#conc)" stroke="#000" stroke-width="2" />
              <path d="M749 634H942V702H923V640H780L767 653H749Z" fill="url(#conc)" stroke="#000" stroke-width="2" />
              <rect x="904" y="701" width="57" height="19" fill="url(#conc)" stroke="#000" stroke-width="2" />
              <path d="M1022 645L1032 662" stroke="#000" />
              <path d="M1031 648H1043V662H1031zM993 687H1043V701H993z" fill="#f8f8f8" />
              <path d="M1031 662.500H1118" stroke="#000" /><path d="M1043 701.500H1118" class="lv" />
              <path d="M1043.500 643V726" stroke="#000" />
              <g v-for="l in levels" :key="l.name">
                <text x="1109" :y="l.y - 4" text-anchor="end">{{ l.name }}</text>
                <text x="1110" :y="l.y + 10" text-anchor="end">{{ l.elev }}</text>
                <path :d="`M1098 ${l.y + 0.5}H1120`" stroke="#000" />
                <circle cx="1129" :cy="l.y" r="9.500" fill="#fff" stroke="#0c3a9c" />
                <path :d="`M1129 ${l.y}H1119.500A9.500 9.500 0 0 1 1129 ${l.y - 9.5}ZM1129 ${l.y}H1138.500A9.500 9.500 0 0 1 1129 ${l.y + 9.5}Z`" fill="#0a3cc0" />
              </g>
            </svg>
            <div class="docwin">
              <svg width="52" height="14" viewBox="0 0 52 14"><path d="M2.500 7.500h11v3h-11z" fill="#fff" stroke="#333" /><path d="M20.500 3.500h8v8h-8zM22.500 3V1.500h8v8H29M22.500 5.500h4v4h-4z" fill="none" stroke="#333" /><path d="M38 2.500h3l2.500 3 2.500-3h3l-4 4.500 4 4.500h-3l-2.500-3-2.500 3h-3l4-4.500z" fill="#fff" stroke="#333" /></svg>
            </div>
            <div class="navbar">
              <svg width="34" height="118" viewBox="0 0 34 118">
                <g fill="none" stroke="#999"><circle cx="27" cy="7" r="3.500" /><path d="M25.500 5.500l3 3M28.500 5.500l-3 3" /><circle cx="27" cy="110" r="3.500" /><path d="M25 110h4M5 58.500h26" /></g>
                <path d="M6 32a10 10 0 0 1 10-10h5l3 3v17h-8a10 10 0 0 1-10-10z" fill="#e6e9ec" stroke="#9aa0a6" stroke-width="1.500" />
                <circle cx="15" cy="31" r="5" fill="#f6f6f6" stroke="#9aa0a6" /><path d="M18.500 34.500l3 3" stroke="#9aa0a6" stroke-width="2" />
                <path d="M14 51h6l-3 3zM14 93h6l-3 3z" fill="#888" />
                <rect x="9" y="67" width="11" height="11" fill="#8fbb80" stroke="#7aa56c" />
                <circle cx="19" cy="76" r="3.500" fill="#eee" stroke="#888" stroke-width="1.500" /><path d="M21.500 78.500l3 3" stroke="#888" stroke-width="2" />
                <text x="16" y="44" class="nav2d">2D</text>
              </svg>
            </div>
          </div>
          <div class="vbar viewbar"><i class="tri up"></i><div class="thumb sq"></div><i class="tri"></i></div>
        </div>
        <div class="viewctl">
          <span class="scale">1/4" = 1'-0"</span>
          <button v-for="t in viewTools" :key="t" class="vbtn" :aria-label="t"><svg class="ic" viewBox="0 0 16 16" v-html="icons[t]"></svg></button>
          <div class="hbar grow"><i class="tri left"></i><div class="thumb sq"></div><i class="tri right"></i></div>
          <svg class="corner" width="16" height="16" viewBox="0 0 16 16"><path d="M6 13h2M10 13h2M14 13h1M10 9.500h2M14 9.500h1M14 6h1" stroke="#aaa" stroke-width="2" /></svg>
        </div>
      </section>

      <aside class="props">
        <div class="phead"><span>Properties</span><button aria-label="Close">✕</button></div>
        <div class="pbody">
          <button class="type">
            <span class="thumbnail"><svg width="32" height="36" viewBox="0 0 32 36"><path d="M14 2l16 15-16 13z" fill="#222a33" /><path d="M14.500 2v32" stroke="#222a33" stroke-width="2" /><circle cx="13" cy="17" r="8.500" fill="#e4e7ea" stroke="#444c55" stroke-width="1.500" /></svg></span>
            <span class="tname">Section<br />Building Section</span><i class="tri"></i>
          </button>
          <div class="inst">
            <label class="combo steel"><select aria-label="Instance"><option>Section: Section 1</option></select><i class="tri"></i></label>
            <button class="edit"><svg class="ic" viewBox="0 0 16 16" v-html="icons.editType"></svg>Edit Type</button>
          </div>
          <div class="gridwrap">
            <div class="gridclip">
              <table>
                <tbody v-for="g in groups" :key="g.title">
                  <tr class="group"><th colspan="2"><div><span>{{ g.title }}</span><svg width="8" height="10" viewBox="0 0 8 10"><path d="M1 4.500L4 1.500l3 3M1 8.500l3-3 3 3" fill="none" stroke="#111" stroke-width="1.500" /></svg></div></th></tr>
                  <tr v-for="r in g.rows" :key="r.name" :class="{ dim: r.dim }">
                    <td class="n">{{ r.name }}</td>
                    <td :class="r.kind">
                      <button v-if="r.kind === 'button'">{{ r.value }}</button>
                      <input v-else-if="r.kind === 'check'" v-model="r.on" type="checkbox" :aria-label="r.name" />
                      <input v-else-if="r.kind === 'field'" v-model="r.value" type="text" :aria-label="r.name" />
                      <template v-else>{{ r.value }}</template>
                    </td>
                  </tr>
                </tbody>
              </table>
            </div>
            <div class="vbar"><i class="tri up"></i><div class="thumb prop-thumb"><i class="grip"></i></div><i class="tri"></i></div>
          </div>
          <div class="pfoot"><a href="#">Properties help</a><button disabled>Apply</button></div>
        </div>
      </aside>
    </main>

    <footer class="status">
      <span class="msg">Click to select, TAB for alternates, CTRL adds, SHIFT unselects.</span>
      <button class="sbtn" aria-label="Worksets"><svg class="ic" viewBox="0 0 16 16" v-html="icons.worksets"></svg></button>
      <label class="combo white ws"><input v-model="filterText" aria-label="Active workset" /><i class="tri"></i></label>
      <button class="sbtn req"><svg class="ic" viewBox="0 0 16 16" v-html="icons.editable"></svg>:0</button>
      <button class="sbtn" aria-label="Design options"><svg class="ic" viewBox="0 0 16 16" v-html="icons.optBox"></svg></button>
      <button class="sbtn" aria-label="Active only"><svg class="ic" viewBox="0 0 16 16" v-html="icons.optActive"></svg></button>
      <label class="combo white mm"><select aria-label="Active design option"><option>Main Model</option></select><i class="tri"></i></label>
      <div class="sel">
        <button v-for="t in selectTools" :key="t" class="sbtn" :aria-label="t"><svg class="ic" viewBox="0 0 16 16" v-html="icons[t]"></svg></button>
        <span class="filter"><svg class="ic" viewBox="0 0 16 16" v-html="icons.filter"></svg>:0</span>
      </div>
    </footer>
    <div class="taskbar">
      <svg class="orb" width="34" height="12" viewBox="0 0 34 12"><circle cx="17" cy="17" r="16" fill="#5a86ac" stroke="#284660" /><path d="M9 9q4-4 8-2v5H8z" fill="#e8642c" /><path d="M18 7q4 2 7 0l1 5h-8z" fill="#8cc04a" /></svg>
      <i class="task a"></i><i class="task b"></i><i class="task"></i><i class="desk"></i>
    </div>
  </div>
</template>

<style>
html, body { margin: 0; overflow: hidden; }
</style>

<style scoped>
* { box-sizing: border-box; }
.app { height: 100vh; display: flex; flex-direction: column; background: #d0d2d5; color: #222; font: 11px/18px "Open Sans", "Noto Sans", sans-serif; }
button { font: inherit; color: inherit; background: none; border: 0; padding: 0; margin: 0; }
input, select { font: inherit; color: inherit; margin: 0; }
svg { display: block; flex: none; }
.ic { width: 16px; height: 16px; }
.ic32 { width: 32px; height: 32px; }
.tri { flex: none; width: 0; height: 0; border: 3px solid transparent; border-top: 4px solid #333; border-bottom: 0; }
.tri.up { border-top: 0; border-bottom: 4px solid #333; }
.tri.right { border: 4px solid transparent; border-left: 5px solid #111; border-right: 0; }
.tri.left { border: 4px solid transparent; border-right: 5px solid #333; border-left: 0; }

.top { position: relative; display: flex; flex: none; height: 44px; background: #8f8f8f; }
.logo { width: 41px; height: 41px; border: 1px solid #222; background: linear-gradient(#777, #c4c4c4); display: flex; align-items: center; justify-content: center; gap: 1px; }
.bars { flex: 1; min-width: 0; }
.titlebar { height: 24px; display: flex; align-items: center; background: linear-gradient(#c8c8c8, #bcbcbc); border-bottom: 1px solid #5e5e5e; padding-left: 4px; }
.quick { display: flex; align-items: center; flex: none; }
.qbtn { width: 24px; height: 22px; display: flex; align-items: center; justify-content: center; flex: none; }
.qbtn.letter { font-size: 18px; font-weight: 700; color: #333; }
.qarrow { width: 12px; height: 22px; display: flex; align-items: center; justify-content: center; flex: none; }
.qarrow.custom { width: 14px; }
.qarrow.custom .tri { border-top-color: #000; border-left-width: 4px; border-right-width: 4px; }
.qsep { width: 7px; height: 22px; background: linear-gradient(#aaa, #aaa) 3px 0 / 1px 100% no-repeat; }
h1 { flex: 1; margin: 0; text-align: center; font-size: 12px; font-weight: 400; line-height: 22px; color: #777; white-space: nowrap; }
.search { display: flex; align-items: center; flex: none; }
.search input { width: 178px; height: 21px; border: 1px solid #ddd; border-top-color: #999; background: #e2e2e2; margin-left: 3px; padding: 0 3px; font-style: italic; }
.search input::placeholder { color: #555; opacity: 1; }
.wincontrols { display: flex; align-items: center; flex: none; margin-left: 182px; width: 103px; }
.wincontrols .win { margin-left: auto; }
.tabs { display: flex; height: 20px; align-items: flex-end; padding-left: 4px; gap: 1px; }
.tabs button { height: 18px; line-height: 16px; padding: 0 10px; color: #1c1c1c; white-space: nowrap; }
.tabs button.on { background: linear-gradient(#c8c8c8, #f8f8f8); border: 1px solid #eee; border-bottom: 0; }
.tabs .pill { width: 15px; height: 9px; background: #e6e6e6; border: 1px solid #333; border-radius: 2px; margin: 0 4px 5px 24px; display: flex; align-items: center; justify-content: center; }
.tabs > .tri { margin-bottom: 7px; }
.redacted { position: absolute; top: 0; right: 92px; width: 195px; height: 35px; background: #000; }

.ribbon { display: flex; flex: none; height: 94px; background: #f8f8f8; }
.panel { display: flex; flex-direction: column; flex: none; border-right: 2px solid #cfcfcf; }
.body { height: 76px; padding-top: 3px; display: flex; }
.body.center { justify-content: center; }
.panel footer { height: 18px; padding-bottom: 2px; border-top: 1px solid #c4c4c4; background: #dedede; display: flex; align-items: center; justify-content: center; gap: 5px; white-space: nowrap; }
.p-select { width: 58px; }
.p-select footer { background: #efefef; }
.p-select .tri { border-width: 4px; border-top-width: 5px; border-bottom-width: 0; }
.p-settings { flex: 1; width: 769px; }
.p-location { width: 97px; }
.p-design { width: 204px; }
.p-manage { width: 94px; }
.p-phasing { width: 53px; }
.p-selection { width: 59px; }
.p-inquiry { width: 48px; }
.p-macros { width: 48px; border-right: 0; }
.ribbon-end { width: 10px; background: linear-gradient(90deg, #999, #ddd 70%, #888); }
.big { display: flex; flex-direction: column; align-items: center; width: 50px; padding-top: 2px; line-height: 15px; position: relative; }
.big span { padding-top: 4px; }
.big > .tri { position: absolute; right: 0; bottom: 16px; }
.modify { width: 44px; height: 72px; margin-left: 8px; padding-top: 1px; background: linear-gradient(#b4d4f0, #9cc2e6); border: 1px solid #3f6f9f; }
.materials { width: 57px; margin: 0 0 0 1px; }
.additional { width: 66px; margin-left: 17px; }
.col { display: flex; flex-direction: column; }
.col.mid { padding-top: 12px; }
.col.grow { flex: 1; }
.cmd { display: flex; align-items: center; gap: 5px; height: 24px; white-space: nowrap; }
.cmd.off { color: #999; padding-left: 4px; }
.c1 { width: 136px; margin-left: 3px; }
.c2 { width: 132px; }
.c3 { width: 174px; }
.c4 { width: 176px; border-left: 1px solid #ccc; padding-left: 10px; height: 72px; }
.c4 .cmd .tri { margin-left: 2px; }
.p-location .col { width: 40px; margin-left: 14px; }
.p-manage .big { width: 66px; }
.p-manage .cmd, .p-selection .cmd, .p-inquiry .cmd, .p-macros .cmd { justify-content: center; }
.combo { display: flex; position: relative; align-items: center; }
.combo select, .combo input { appearance: none; flex: 1; width: 100%; height: 100%; border: 0; background: transparent; padding: 0 3px; outline: 0; }
.combo .tri { position: absolute; right: 4px; pointer-events: none; border-width: 4px; border-top-width: 5px; border-bottom-width: 0; border-top-color: #666; }
.combo.gray { height: 21px; margin: 1px 2px 0 0; border: 1px solid #b0b0b0; background: #ececec; color: #666; }
.combo.steel { width: 142px; height: 22px; border: 1px solid #777; border-radius: 2px; background: linear-gradient(#e4e4e4, #bcbcbc); color: #111; }
.combo.steel .tri { border-top-color: #111; }
.combo.white { background: #f8f8f8; color: #666; height: 22px; border: 1px solid #bbb; }

main { flex: 1; min-height: 0; display: flex; padding-top: 2px; background: #dcdee0; }
.phead { height: 20px; flex: none; display: flex; align-items: center; justify-content: space-between; background: #a1b2c4; color: #3c4f63; padding: 0 5px 0 4px; }
.phead button { color: #000; font: 700 12px/18px "DejaVu Sans", sans-serif; }
.pbody { flex: 1; min-height: 0; display: flex; flex-direction: column; border-left: 2px solid #777; border-top: 2px solid #777; background: #ececec; }
.browser { width: 212px; flex: none; display: flex; flex-direction: column; margin-right: 5px; }
.browser .pbody { padding-right: 1px; }
.treewrap { flex: 1; min-height: 0; display: flex; background: #f8f8f8; }
.tree { flex: 1; min-width: 0; overflow: hidden; list-style: none; margin: 0; padding: 0; color: #111; }
.tree li { display: flex; align-items: center; height: 18px; white-space: nowrap; }
.guide { position: relative; flex: none; width: 20px; height: 18px; }
.guide::before { content: ""; position: absolute; left: 8px; top: 0; border-left: 1px dotted #888; height: 0; }
.guide.full::before { height: 18px; }
.guide.half::before { height: 9px; }
.guide.below::before { top: 9px; height: 9px; }
.guide.stub::after { content: ""; position: absolute; left: 9px; right: 0; top: 9px; border-top: 1px dotted #888; }
.exp { position: absolute; left: 4px; top: 5px; z-index: 1; }
.tail { flex: none; width: 4px; margin-right: 2px; border-top: 1px dotted #888; }
.lbl.iconed { padding-left: 6px; }
.lbl.cur { font-weight: 700; background: #d0d0d0; padding: 0 4px; margin-left: -3px; }
.vbar { width: 16px; flex: none; background: #e6e6e6; display: flex; flex-direction: column; align-items: center; padding: 7px 0 5px; }
.thumb { background: linear-gradient(90deg, #e4e4e6, #b4b4b8); border: 1px solid #8c8c90; border-radius: 2px; display: flex; align-items: center; justify-content: center; }
.tree-thumb { width: 15px; margin-top: 7px; flex: 1; margin-bottom: 109px; }
.grip { width: 7px; height: 8px; background: repeating-linear-gradient(#555 0 1px, transparent 1px 3px); }
.grip.v { background: repeating-linear-gradient(90deg, #555 0 1px, transparent 1px 3px); height: 6px; }
.hbar { height: 15px; flex: none; background: #e9e9e9; display: flex; align-items: center; padding: 0 21px 0 5px; }
.thumb.h { width: 109px; height: 14px; margin: 0 auto 0 8px; background: linear-gradient(#eee, #b8b8b8); }

.view { flex: 1; min-width: 0; display: flex; flex-direction: column; border-left: 1px solid #444; border-top: 2px solid #555; margin-right: 6px; }
.canvasrow { flex: 1; min-height: 0; display: flex; }
.canvas { position: relative; flex: 1; min-width: 0; background: #f8f8f8; overflow: hidden; }
.drawing { width: 100%; height: 100%; }
.drawing text { font: 11px "DejaVu Sans", sans-serif; fill: #111; }
.lv { stroke: #000; stroke-dasharray: 38 10 9 9; stroke-dashoffset: 45; fill: none; }
.lv.soft { stroke: #888; }
.docwin { position: absolute; right: 2px; top: 7px; }
.navbar { position: absolute; right: 1px; top: 28px; width: 36px; height: 118px; border: 2px solid #aaa; border-radius: 5px; background: #e6e6e6; display: flex; align-items: center; justify-content: center; }
.nav2d { font: 700 10px "Open Sans", sans-serif; fill: #6f93b0; }
.viewbar { justify-content: space-between; background: #e9e9e9; }
.thumb.sq { width: 15px; height: 15px; background: linear-gradient(#eee, #aaa); border-color: #777; }
.viewctl { height: 18px; flex: none; display: flex; align-items: center; background: #e8e8e8; padding-left: 11px; }
.scale { width: 65px; white-space: nowrap; }
.vbtn { width: 21px; display: flex; justify-content: center; }
.hbar.grow { flex: 1; justify-content: space-between; height: 16px; background: #dedede; border-top: 1px solid #ccc; }
.viewctl .hbar { padding: 0 6px 0 7px; }

.props { width: 230px; flex: none; display: flex; flex-direction: column; }
.props .pbody { padding-right: 1px; }
.type { height: 72px; flex: none; display: flex; align-items: center; text-align: left; line-height: 16px; padding: 0 2px; background: linear-gradient(#fafafa, #dadcde); border-bottom: 1px solid #bbb; }
.thumbnail { width: 66px; height: 66px; border: 1px solid #bbb; background: #f0f1f2; display: flex; align-items: center; justify-content: center; }
.tname { flex: 1; padding-left: 5px; }
.inst { height: 25px; flex: none; display: flex; align-items: center; gap: 7px; }
.edit { display: flex; align-items: center; gap: 5px; white-space: nowrap; }
.gridwrap { flex: 1; min-height: 0; display: flex; }
.gridclip { flex: 1; min-width: 0; overflow: hidden; background: #f8f8f8; }
table { width: 100%; table-layout: fixed; border-collapse: separate; border-spacing: 0; color: #111; }
th { height: 18px; padding: 0; font-weight: 400; background: #c6c6c6; text-align: left; }
th div { display: flex; justify-content: space-between; align-items: center; height: 18px; padding: 0 6px 0 4px; }
td { height: 18px; line-height: 15px; padding: 0 0 2px 4px; border-bottom: 1px dotted #777; border-right: 1px dotted #777; white-space: pre; overflow: hidden; }
td.n { padding-left: 10px; }
.dim td { color: #777; }
td.button, td.field, td.check { padding: 0 1px 0 1px; }
td.check { padding-left: 4px; }
td button { display: block; width: 100%; height: 16px; line-height: 14px; border: 1px solid #777; border-bottom-color: #444; border-right-color: #555; border-radius: 2px; background: linear-gradient(#e4e4e4, #bcbcbc); white-space: nowrap; }
td input[type="text"] { display: block; width: 100%; height: 16px; border: 1px solid #000; background: #fff; padding: 0 5px; }
td input[type="checkbox"] { appearance: none; display: block; width: 13px; height: 13px; margin-left: -1px; border: 1px solid #8a8f96; background: linear-gradient(135deg, #ccc, #f6f6f6); }
td input[type="checkbox"]:checked { background: #d5dfec; }
td input[type="checkbox"]:checked::after { content: ""; display: block; width: 4px; height: 8px; margin: 0 0 0 3px; border: solid #2c4478; border-width: 0 2px 2px 0; transform: rotate(40deg); }
.prop-thumb { width: 15px; flex: 1; margin: 6px 0 66px; }
.props .gridwrap .vbar { width: 17px; }
.pfoot { height: 23px; flex: none; display: flex; align-items: center; justify-content: space-between; padding: 0 3px 3px 2px; }
.pfoot a { color: #1a5fa0; text-decoration: underline; }
.pfoot button { width: 73px; height: 20px; border: 1px solid #aaa; border-radius: 3px; color: #888; background: #efefef; }

.status { margin-top: 28px; height: 25px; flex: none; display: flex; align-items: center; background: linear-gradient(#d8d8d8, #aeaeae); border-top: 1px solid #888; }
.msg { width: 497px; padding-left: 2px; white-space: nowrap; color: #111; }
.sbtn { height: 22px; width: 24px; display: flex; align-items: center; justify-content: center; gap: 4px; background: #c8c8c8; margin-right: 2px; }
.ws { width: 208px; }
.req { width: 50px; margin: 0 3px 0 4px; justify-content: flex-start; padding-left: 4px; }
.mm { width: 156px; }
.sel { margin-left: auto; display: flex; align-items: center; padding-right: 66px; }
.filter { display: flex; align-items: center; padding-left: 2px; }
.taskbar { position: relative; height: 7px; flex: none; display: flex; border-top: 1px solid #28425e; background: linear-gradient(90deg, #42566e, #86a4c8 12%, #8aa8cc 76%, #6b84a6 80%, #6b84a6); padding-left: 244px; gap: 4px; }
.orb { position: absolute; left: 10px; bottom: 0; }
.task { width: 42px; background: #dce6f2; border: 1px solid #2c4460; border-bottom: 0; }
.task.a { margin-right: 228px; }
.desk { width: 12px; margin-left: auto; background: #7e8c98; border-left: 1px solid #222; }
</style>
